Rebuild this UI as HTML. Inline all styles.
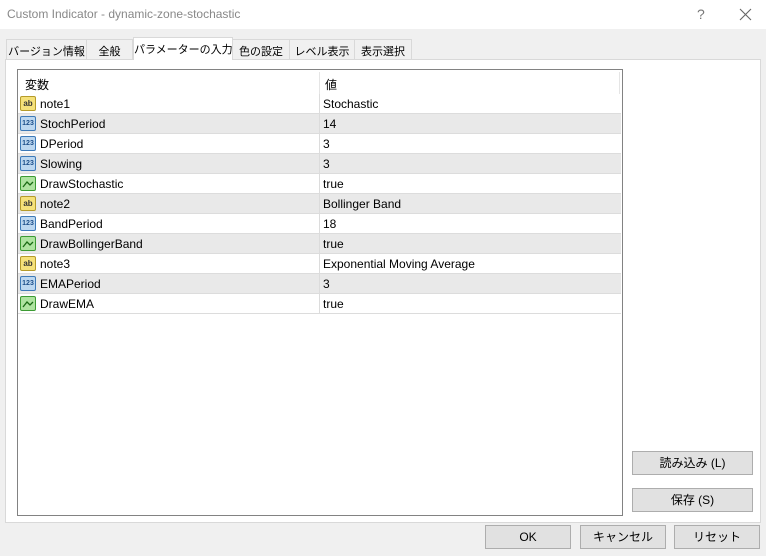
<!DOCTYPE html>
<html><head><meta charset="utf-8"><style>
*{margin:0;padding:0;box-sizing:border-box}
body{width:766px;height:556px;background:#f0f0f0;font-family:"Liberation Sans","Noto Sans CJK JP",sans-serif;font-size:12px;color:#000;position:relative;overflow:hidden}
.title{position:absolute;left:0;top:0;width:766px;height:29px;background:#fff}
.title span{position:absolute;left:7px;top:7px;color:#888;font-size:12px}
.abs{position:absolute}
.tab{position:absolute;top:39px;height:20px;border:1px solid #d9d9d9;border-bottom:none;background:#f0f0f0;font-size:11px;padding:3px 0 0 0;text-align:center;white-space:nowrap;overflow:hidden}
.panel{position:absolute;left:5px;top:59px;width:756px;height:464px;background:#fff;border:1px solid #d9d9d9}
.list{position:absolute;left:17px;top:69px;width:606px;height:447px;border:1px solid #828282;background:#fff}
.row{position:absolute;left:0;width:603px;height:20px;border-bottom:1px solid #dcdcdc}
.row.g{background:#e9e9e9}
.row .n{position:absolute;left:22px;top:3px}
.row .v{position:absolute;left:305px;top:3px}
.row .d{position:absolute;left:301px;top:0;width:1px;height:20px;background:#dcdcdc}
.ic{position:absolute;left:2px;top:2px;width:16px;height:15px;border-radius:2px;font-size:8px;font-weight:bold;text-align:center;line-height:14px}
.ab{background:#f5e17a;border:1px solid #b59b2a;color:#333}
.n1{background:#bcd7f0;border:1px solid #3d7ab8;color:#1d4f8a;font-size:7px}
.bo{background:#aee3a0;border:1px solid #3c9b33}
.btn{position:absolute;height:24px;background:#e1e1e1;border:1px solid #adadad;text-align:center;line-height:22px;font-size:12px;white-space:nowrap}
</style></head><body>
<div class="title"><span>Custom Indicator - dynamic-zone-stochastic</span>
<span style="left:697px;top:6px;color:#777;font-size:14px">?</span>
<svg class="abs" style="left:739px;top:8px" width="13" height="13"><path d="M1 1L12 12M12 1L1 12" stroke="#666" stroke-width="1.1"/></svg></div>
<div class="panel"></div>
<div class="tab" style="left:6px;width:81px">バージョン情報</div>
<div class="tab" style="left:86px;width:47px">全般</div>
<div class="tab" style="left:133px;top:37px;height:23px;width:100px;background:#fff;z-index:2;padding-top:3px">パラメーターの入力</div>
<div class="tab" style="left:232px;width:58px">色の設定</div>
<div class="tab" style="left:289px;width:66px">レベル表示</div>
<div class="tab" style="left:354px;width:58px">表示選択</div>
<div class="list">
<div class="abs" style="left:7px;top:6px">変数</div>
<div class="abs" style="left:301px;top:2px;width:1px;height:22px;background:#e5e5e5"></div>
<div class="abs" style="left:307px;top:6px">値</div>
<div class="abs" style="left:601px;top:2px;width:1px;height:22px;background:#e5e5e5"></div>
<div class="row" style="top:24px"><div class="ic ab">ab</div><span class="n">note1</span><div class="d"></div><span class="v">Stochastic</span></div>
<div class="row g" style="top:44px"><div class="ic n1">123</div><span class="n">StochPeriod</span><div class="d"></div><span class="v">14</span></div>
<div class="row" style="top:64px"><div class="ic n1">123</div><span class="n">DPeriod</span><div class="d"></div><span class="v">3</span></div>
<div class="row g" style="top:84px"><div class="ic n1">123</div><span class="n">Slowing</span><div class="d"></div><span class="v">3</span></div>
<div class="row" style="top:104px"><div class="ic bo"><svg width="14" height="13"><path d="M2 10L6 5L9 8L12 5" stroke="#1a6b14" fill="none" stroke-width="1.3"/></svg></div><span class="n">DrawStochastic</span><div class="d"></div><span class="v">true</span></div>
<div class="row g" style="top:124px"><div class="ic ab">ab</div><span class="n">note2</span><div class="d"></div><span class="v">Bollinger Band</span></div>
<div class="row" style="top:144px"><div class="ic n1">123</div><span class="n">BandPeriod</span><div class="d"></div><span class="v">18</span></div>
<div class="row g" style="top:164px"><div class="ic bo"><svg width="14" height="13"><path d="M2 10L6 5L9 8L12 5" stroke="#1a6b14" fill="none" stroke-width="1.3"/></svg></div><span class="n">DrawBollingerBand</span><div class="d"></div><span class="v">true</span></div>
<div class="row" style="top:184px"><div class="ic ab">ab</div><span class="n">note3</span><div class="d"></div><span class="v">Exponential Moving Average</span></div>
<div class="row g" style="top:204px"><div class="ic n1">123</div><span class="n">EMAPeriod</span><div class="d"></div><span class="v">3</span></div>
<div class="row" style="top:224px"><div class="ic bo"><svg width="14" height="13"><path d="M2 10L6 5L9 8L12 5" stroke="#1a6b14" fill="none" stroke-width="1.3"/></svg></div><span class="n">DrawEMA</span><div class="d"></div><span class="v">true</span></div>
</div>
<div class="btn" style="left:632px;top:451px;width:121px">読み込み (L)</div>
<div class="btn" style="left:632px;top:488px;width:121px">保存 (S)</div>
<div class="btn" style="left:485px;top:525px;width:86px">OK</div>
<div class="btn" style="left:580px;top:525px;width:86px">キャンセル</div>
<div class="btn" style="left:674px;top:525px;width:86px">リセット</div>
</body></html>
